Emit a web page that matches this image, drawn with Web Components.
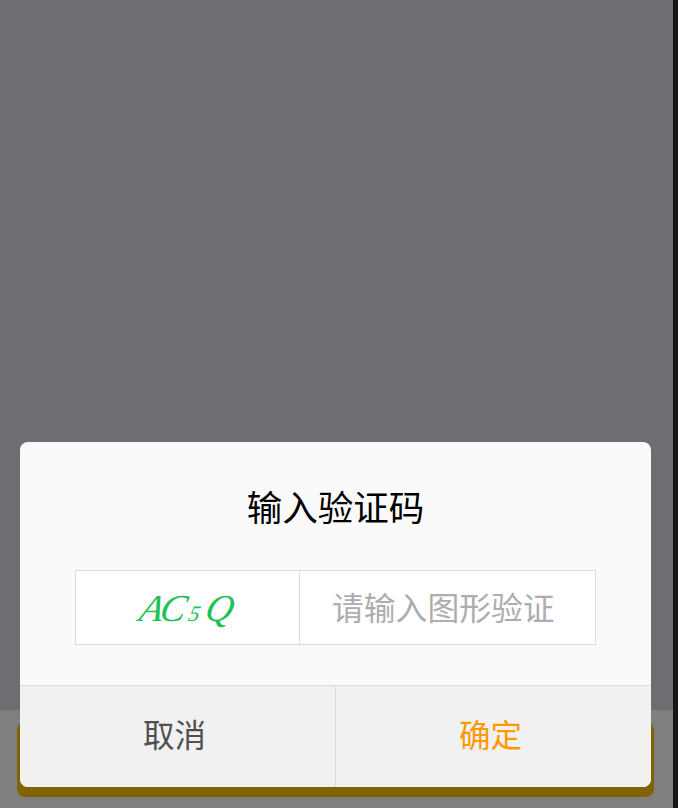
<!DOCTYPE html>
<html lang="zh">
<head>
<meta charset="utf-8">
<title>输入验证码</title>
<style>
  html, body { margin: 0; padding: 0; background: #161616; }
  body { font-family: "Noto Sans CJK SC", "Noto Sans", sans-serif; }
</style>
</head>
<body>
<app-screen>
  <captcha-dialog heading="输入验证码" hint="请输入图形验证">
    <captcha-code slot="code" code="AC5Q"></captcha-code>
    <dialog-button slot="actions" tone="muted">取消</dialog-button>
    <dialog-button slot="actions" tone="accent">确定</dialog-button>
  </captcha-dialog>
</app-screen>

<script>
class appScreen extends HTMLElement {
    connectedCallback() {
        const shadow = this.attachShadow({ mode: "open" });
        shadow.innerHTML = `
            <style>
                :host {
                    display: block;
                    position: relative;
                    width: 673px;
                    height: 808px;
                    overflow: hidden;
                }
                .page {
                    display: flex;
                    flex-direction: column;
                    height: 100%;
                }
                .dim {
                    flex: 1;
                    background: #6e6d72;
                }
                .footer {
                    height: 98px;
                    box-sizing: border-box;
                    padding: 12px 19px 11px 17px;
                    background: #7f7f7f;
                }
                .bar {
                    height: 100%;
                    border-radius: 8px;
                    background: #806304;
                }
                ::slotted(captcha-dialog) {
                    position: absolute;
                    left: 20px;
                    top: 442px;
                }
            </style>
            <div class="page">
                <div class="dim"></div>
                <div class="footer"><div class="bar"></div></div>
            </div>
            <slot></slot>
        `;
    }
}

class captchaDialog extends HTMLElement {
    connectedCallback() {
        const shadow = this.attachShadow({ mode: "open" });
        shadow.innerHTML = `
            <style>
                :host {
                    display: block;
                    width: 631px;
                    height: 345px;
                    border-radius: 8px;
                    overflow: hidden;
                    background: #fafafa;
                }
                .box {
                    display: flex;
                    flex-direction: column;
                    height: 100%;
                }
                h2 {
                    margin: 0;
                    padding-top: 39px;
                    height: 52px;
                    font-size: 35.5px;
                    font-weight: 400;
                    line-height: 50px;
                    text-align: center;
                    color: #000;
                }
                .row {
                    display: flex;
                    box-sizing: border-box;
                    width: 521px;
                    height: 75px;
                    margin: 37px 0 40px 55px;
                    border: 1px solid #dcdcdc;
                    background: #fff;
                }
                .code {
                    width: 223px;
                    border-right: 1px solid #dcdcdc;
                    display: flex;
                    align-items: center;
                    justify-content: center;
                }
                .hint {
                    flex: 1;
                    overflow: hidden;
                    white-space: nowrap;
                    padding-left: 32px;
                    font-size: 31.8px;
                    line-height: 71px;
                    color: #adadad;
                }
                .actions {
                    flex: 1;
                    display: grid;
                    grid-template-columns: 315px 316px;
                    border-top: 1px solid #dcdcdc;
                    background: #f1f1f1;
                }
            </style>
            <div class="box">
                <h2>${this.getAttribute("heading")}</h2>
                <div class="row">
                    <div class="code"><slot name="code"></slot></div>
                    <div class="hint">${this.getAttribute("hint")}</div>
                </div>
                <div class="actions"><slot name="actions"></slot></div>
            </div>
        `;
    }
}

class captchaCode extends HTMLElement {
    connectedCallback() {
        const shadow = this.attachShadow({ mode: "open" });
        const chars = this.getAttribute("code").split("");
        shadow.innerHTML = `
            <style>
                :host {
                    display: flex;
                    align-items: baseline;
                    font-family: "Liberation Serif", serif;
                    font-style: italic;
                    font-size: 38px;
                    line-height: 1;
                    color: #1fc157;
                    transform: skewX(-14deg);
                }
                span:nth-of-type(1) { margin-right: -3px; }
                span:nth-of-type(2) { margin-right: 4px; }
                span:nth-of-type(3) { font-size: 22px; margin-right: 5px; }
            </style>
            ${chars.map(c => `<span>${c}</span>`).join("")}
        `;
    }
}

class dialogButton extends HTMLElement {
    connectedCallback() {
        const shadow = this.attachShadow({ mode: "open" });
        shadow.innerHTML = `
            <style>
                :host {
                    display: flex;
                    align-items: center;
                    justify-content: center;
                    box-sizing: border-box;
                    padding: 0 6px 8px 0;
                    font-size: 31.5px;
                    color: #505050;
                }
                :host([tone="accent"]) {
                    color: #ff9900;
                    border-left: 1px solid #dcdcdc;
                }
            </style>
            <slot></slot>
        `;
    }
}

customElements.define('dialog-button', dialogButton);
customElements.define('captcha-code', captchaCode);
customElements.define('captcha-dialog', captchaDialog);
customElements.define('app-screen', appScreen);
</script>
</body>
</html>
